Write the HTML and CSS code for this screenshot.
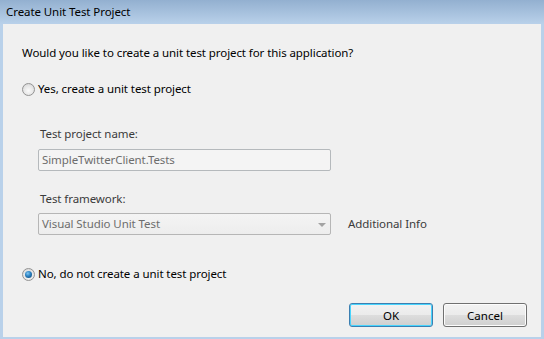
FILE: index.html
```html
<!DOCTYPE html>
<html lang="en">
<head>
    <meta charset="UTF-8">
    <title>Create Unit Test Project</title>
    <link rel="stylesheet" href="styles.css">
</head>
<body>
    <div class="window">
        <div class="titlebar">Create Unit Test Project</div>

        <div class="content">
            <p class="question">Would you like to create a unit test project for this application?</p>

            <label class="radio-row">
                <span class="radio"></span>
                <span>Yes, create a unit test project</span>
            </label>

            <div class="options">
                <div class="field-label">Test project name:</div>
                <div class="textbox">SimpleTwitterClient.Tests</div>

                <div class="field-label second">Test framework:</div>
                <div class="select-row">
                    <div class="select">
                        <span>Visual Studio Unit Test</span>
                        <span class="arrow"></span>
                    </div>
                    <span class="info">Additional Info</span>
                </div>
            </div>

            <label class="radio-row no-row">
                <span class="radio checked"></span>
                <span>No, do not create a unit test project</span>
            </label>

            <div class="buttons">
                <button class="btn default">OK</button>
                <button class="btn">Cancel</button>
            </div>
        </div>
    </div>
</body>
</html>
```

FILE: styles.css
```css
* {
    margin: 0;
    padding: 0;
    box-sizing: border-box;
}

body {
    font-family: 'Noto Sans', 'Open Sans', sans-serif;
    font-size: 11.5px;
    letter-spacing: -0.08px;
    line-height: 16px;
    color: #000;
    background-color: #b9d1ea;
    width: 544px;
    height: 339px;
    overflow: hidden;
}

.window {
    height: 339px;
    display: flex;
    flex-direction: column;
}

.titlebar {
    height: 24px;
    padding: 4px 0 0 6px;
    background: linear-gradient(to bottom, #93b0d0, #b9d1ea);
    color: #000;
}

.content {
    flex: 1;
    margin: 0 3px 2px 3px;
    background-color: #f0f0f0;
    padding: 21px 14px 0 19px;
    display: flex;
    flex-direction: column;
}

.question {
    height: 16px;
}

.radio-row {
    display: flex;
    align-items: center;
    gap: 3px;
    margin-top: 20px;
    height: 16px;
}

.radio {
    width: 13px;
    height: 13px;
    border-radius: 50%;
    border: 1px solid #939393;
    background: radial-gradient(circle at 50% 60%, #fbfbfb 0%, #e6e6e6 55%, #cfcfcf 100%);
    position: relative;
}

.radio.checked::after {
    content: '';
    position: absolute;
    left: 2px;
    top: 2px;
    width: 7px;
    height: 7px;
    border-radius: 50%;
    background: radial-gradient(circle at 40% 35%, #7fc6f2 0%, #2a80c0 45%, #0e3f6b 100%);
}

.options {
    padding-left: 16px;
    margin-top: 29px;
}

.field-label {
    color: #3b3b3b;
    padding-left: 2px;
    height: 16px;
}

.field-label.second {
    margin-top: 20px;
}

.textbox {
    margin-top: 7px;
    width: 293px;
    height: 22px;
    border: 1px solid #b5b9bc;
    border-radius: 2px;
    background-color: #f4f4f4;
    color: #6d6d6d;
    padding: 2px 0 0 3px;
}

.select-row {
    display: flex;
    align-items: center;
    gap: 17px;
    margin-top: 6px;
}

.select {
    width: 293px;
    height: 22px;
    border: 1px solid #b6b6b6;
    border-radius: 2px;
    background: linear-gradient(to bottom, #f4f4f4, #ededed);
    color: #6d6d6d;
    padding: 2px 0 0 3px;
    display: flex;
    justify-content: space-between;
}

.arrow {
    width: 0;
    height: 0;
    margin: 7px 4px 0 0;
    border-left: 4px solid transparent;
    border-right: 4px solid transparent;
    border-top: 4px solid #a3a3a3;
}

.info {
    color: #3b3b3b;
}

.no-row {
    margin-top: 31px;
}

.buttons {
    display: flex;
    justify-content: flex-end;
    gap: 10px;
    margin-top: 21px;
}

.btn {
    width: 84px;
    height: 24px;
    font-family: inherit;
    font-size: 11.5px;
    color: #000;
    border: 1px solid #707070;
    border-radius: 3px;
    background: linear-gradient(to bottom, #f2f2f2 0%, #ebebeb 50%, #dddddd 51%, #cfcfcf 100%);
    box-shadow: inset 0 0 0 1px #fcfcfc;
}

.btn.default {
    border-color: #3c7fb1;
    box-shadow: inset 0 0 0 1px #48d4fd;
}
```
